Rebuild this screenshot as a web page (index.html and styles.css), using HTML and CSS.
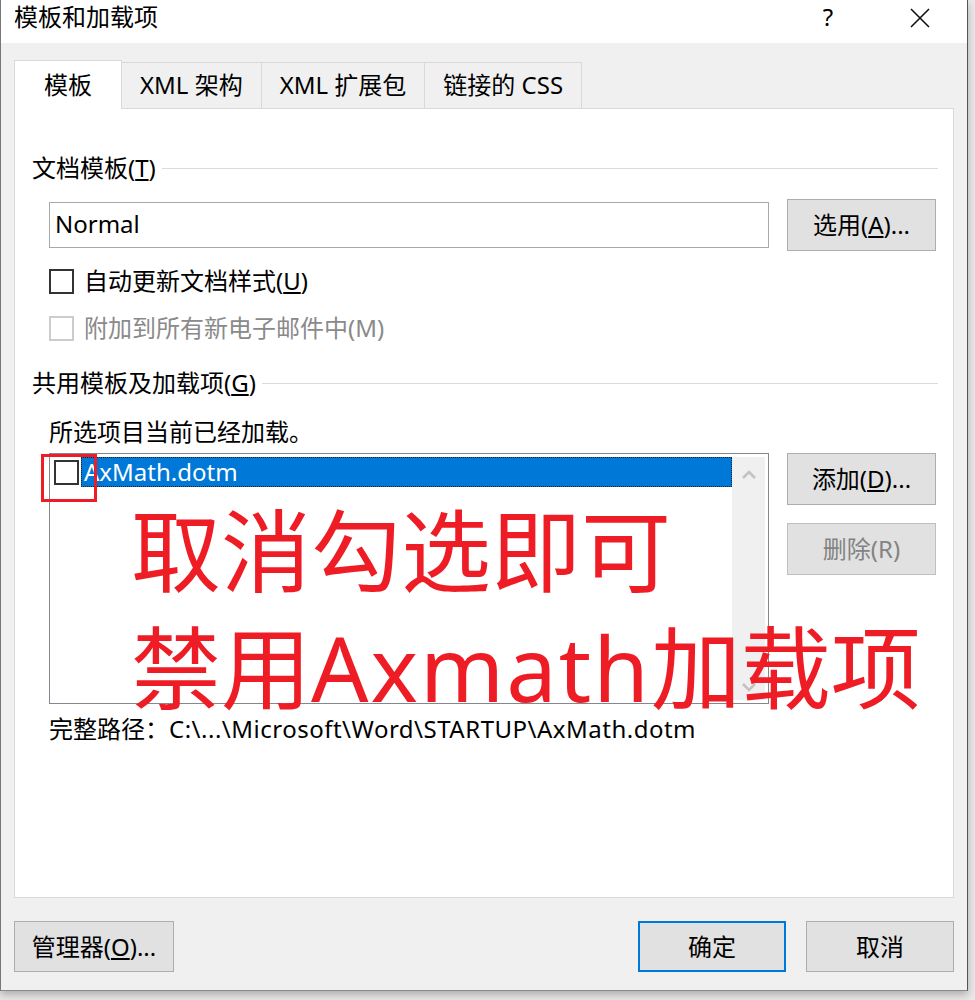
FILE: index.html
```html
<!DOCTYPE html>
<html lang="zh-CN">
<head>
    <meta charset="UTF-8">
    <meta name="viewport" content="width=device-width, initial-scale=1.0">
    <title>模板和加载项</title>
    <link rel="stylesheet" href="styles.css">
</head>
<body>
    <div class="dialog">
        <div class="titlebar">
            <span class="title">模板和加载项</span>
            <span class="help">?</span>
            <span class="close">
                <svg width="20" height="20" viewBox="0 0 20 20"><path d="M1 1L19 19M19 1L1 19" stroke="#111" stroke-width="1.6"/></svg>
            </span>
        </div>
        <div class="content">
            <div class="tabs">
                <div class="tab active">模板</div>
                <div class="tab">XML 架构</div>
                <div class="tab">XML 扩展包</div>
                <div class="tab">链接的 CSS</div>
            </div>
            <div class="panel">
                <div class="group-title">文档模板(<u>T</u>)</div>
                <div class="template-row">
                    <div class="textbox">Normal</div>
                    <button class="btn">选用(<u>A</u>)...</button>
                </div>
                <label class="check"><span class="box"></span><span>自动更新文档样式(<u>U</u>)</span></label>
                <label class="check disabled"><span class="box"></span><span>附加到所有新电子邮件中(M)</span></label>

                <div class="group-title second">共用模板及加载项(<u>G</u>)</div>
                <div class="note">所选项目当前已经加载。</div>
                <div class="addin-row">
                    <div class="list">
                        <div class="items">
                            <div class="item">
                                <span class="box"></span>
                                <span class="item-name">AxMath.dotm</span>
                            </div>
                        </div>
                        <div class="scrollbar">
                            <svg width="16" height="10" viewBox="0 0 16 10"><path d="M2 8L8 2L14 8" fill="none" stroke="#c2c2c2" stroke-width="2.5"/></svg>
                            <svg width="16" height="10" viewBox="0 0 16 10"><path d="M2 2L8 8L14 2" fill="none" stroke="#c2c2c2" stroke-width="2.5"/></svg>
                        </div>
                    </div>
                    <div class="side-buttons">
                        <button class="btn">添加(<u>D</u>)...</button>
                        <button class="btn disabled">删除(R)</button>
                    </div>
                    <!-- red annotation drawn over the dialog -->
                    <div class="mark"></div>
                    <div class="callout">
                        <div class="callout-line">取消勾选即可</div>
                        <div class="callout-line">禁用<span class="latin">Axmath</span>加载项</div>
                    </div>
                </div>
                <div class="path">完整路径：<span class="latin">C:\...\Microsoft\Word\STARTUP\AxMath.dotm</span></div>
            </div>
            <div class="footer">
                <button class="btn wide">管理器(<u>O</u>)...</button>
                <button class="btn default">确定</button>
                <button class="btn">取消</button>
            </div>
        </div>
    </div>
</body>
</html>
```

FILE: styles.css
```css
*{
    margin: 0;
    padding: 0;
    box-sizing: border-box;
}
body{
    background: #e9e9e9;
    width: 975px;
    height: 1000px;
    overflow: hidden;
    font-family: "Noto Sans", "Noto Sans CJK SC", sans-serif;
    font-size: 24px;
    color: #000;
}
.dialog{
    width: 968px;
    background: #f0f0f0;
    border-left: 1px solid #777;
    border-right: 1px solid #555;
    border-bottom: 1px solid #888;
    box-shadow: 0 4px 8px rgba(0, 0, 0, .25);
}
.titlebar{
    height: 43px;
    background: #fff;
    display: flex;
    align-items: flex-start;
    padding-left: 13px;
    padding-right: 24px;
}
.title{
    line-height: 34px;
}
.help{
    margin-left: auto;
    width: 46px;
    line-height: 34px;
    text-align: center;
}
.close{
    width: 46px;
    margin-left: 46px;
    height: 34px;
    display: flex;
    align-items: center;
    justify-content: center;
    padding-top: 2px;
}
.content{
    padding: 17px 13px 18px 13px;
}
.tabs{
    display: flex;
    align-items: flex-end;
}
.tab{
    height: 46px;
    line-height: 44px;
    padding: 0 18px;
    border: 1px solid #d9d9d9;
    border-bottom: none;
    margin-left: -1px;
    background: #f0f0f0;
}
.tab.active{
    height: 49px;
    line-height: 48px;
    padding: 0 29px;
    margin-left: 0;
    margin-bottom: -1px;
    background: #fff;
    position: relative;
    z-index: 1;
}
.panel{
    background: #fff;
    border: 1px solid #d9d9d9;
    height: 790px;
    width: 940px;
    padding: 43px 15px 0 17px;
}
.group-title{
    display: flex;
    align-items: center;
    line-height: 32px;
}
.group-title::after{
    content: '';
    flex: 1;
    border-top: 1px solid #dcdcdc;
    margin-left: 6px;
}
.group-title.second{
    margin-top: 23px;
}
.template-row{
    display: flex;
    align-items: center;
    gap: 18px;
    margin: 15px 0 0 17px;
}
.textbox{
    width: 720px;
    height: 46px;
    border: 1px solid #a9a9a9;
    padding-left: 5px;
    line-height: 42px;
}
.btn{
    font: inherit;
    color: #000;
    background: #e1e1e1;
    border: 1px solid #adadad;
    width: 149px;
    height: 52px;
    line-height: 48px;
}
.btn.disabled{
    color: #838383;
    border-color: #bfbfbf;
}
.check{
    display: flex;
    align-items: center;
    gap: 10px;
    line-height: 32px;
    margin: 14px 0 0 17px;
}
.check + .check{
    margin-top: 15px;
}
.box{
    width: 25px;
    height: 25px;
    border: 2px solid #333;
    background: #fff;
    flex: none;
}
.check.disabled{
    color: #8a8a8a;
}
.check.disabled .box{
    border-color: #cccccc;
}
.note{
    line-height: 32px;
    margin: 17px 0 0 17px;
}
.addin-row{
    display: flex;
    align-items: flex-start;
    gap: 18px;
    margin: 5px 0 0 17px;
    position: relative;
}
.list{
    width: 720px;
    height: 251px;
    border: 1px solid #828790;
    padding: 3px;
    display: flex;
}
.items{
    flex: 1;
}
.item{
    display: flex;
    align-items: center;
    height: 30px;
}
.item .box{
    margin-left: 1px;
}
.item-name{
    flex: 1;
    margin-left: 2px;
    height: 30px;
    line-height: 29px;
    background: #0078d7;
    color: #fff;
    padding-left: 3px;
    outline: 1px dotted #222;
    outline-offset: -1px;
}
.scrollbar{
    width: 33px;
    background: #f0f0f0;
    display: flex;
    flex-direction: column;
    align-items: center;
    justify-content: space-between;
    padding: 13px 0 8px;
}
.side-buttons{
    display: flex;
    flex-direction: column;
    gap: 18px;
}
.mark{
    position: absolute;
    left: -8px;
    top: 1px;
    width: 56px;
    height: 48px;
    border: 3px solid #ee1c25;
    z-index: 2;
}
.callout{
    position: absolute;
    left: 82px;
    top: 49px;
    font-size: 90px;
    line-height: 96px;
    color: #ee1c25;
    white-space: nowrap;
    z-index: 2;
    display: flex;
    flex-direction: column;
    gap: 21px;
}
.callout .latin{
    letter-spacing: 2px;
}
.path{
    line-height: 24px;
    margin: 13px 0 0 17px;
}
.path .latin{
    letter-spacing: 0.5px;
}
.footer{
    display: flex;
    gap: 20px;
    margin-top: 23px;
}
.footer .btn{
    height: 51px;
    width: 148px;
}
.footer .btn.wide{
    width: 160px;
    margin-right: auto;
}
.footer .btn.default{
    border: 2px solid #0078d7;
}
```
